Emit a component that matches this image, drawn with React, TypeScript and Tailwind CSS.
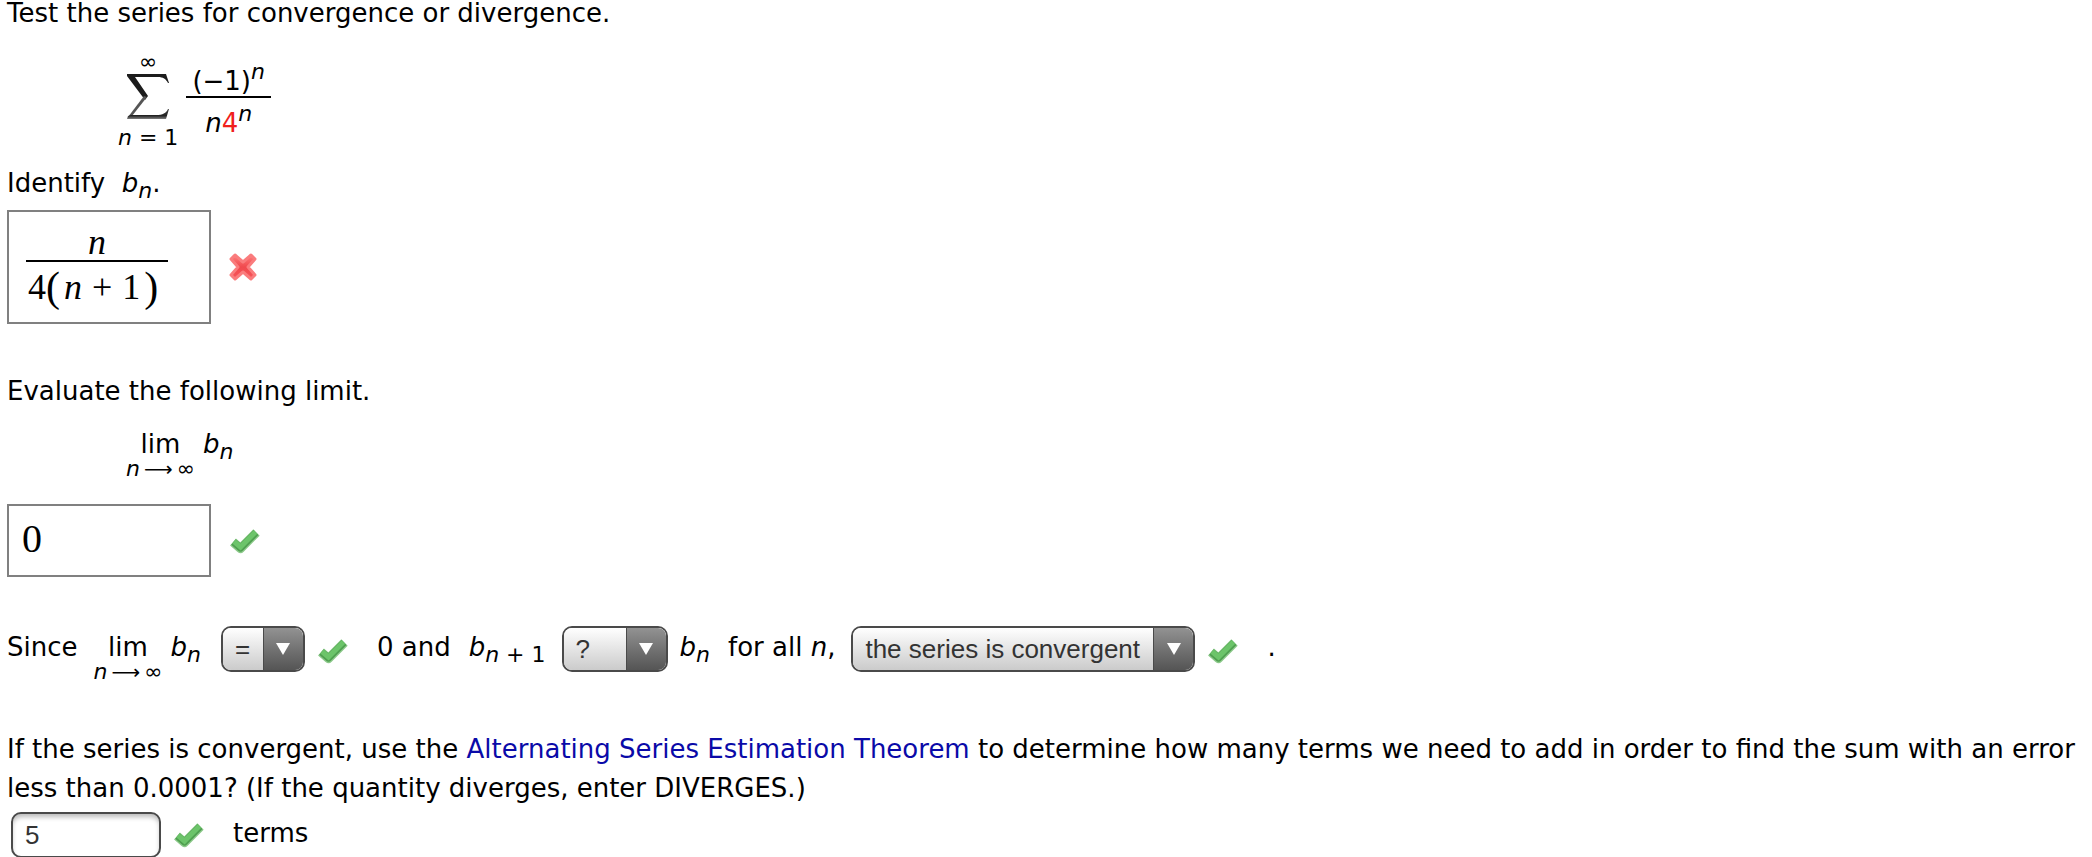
import type { ReactNode } from "react";

const SANS = "font-['DejaVu_Sans',Verdana,sans-serif]";
const SERIF = "font-['Liberation_Serif',serif]";

function Check() {
    return (
        <svg width="32" height="26" viewBox="0 0 32 26" role="img" aria-label="Correct" className="shrink-0">
            <path d="M4 14 L11.5 20.5 L27.5 4.5" fill="none" stroke="#8cc98a" strokeWidth="9" strokeLinejoin="round" />
            <path d="M4.5 14 L11.5 20 L27 4.5" fill="none" stroke="#4f9f50" strokeWidth="7" strokeLinejoin="round" />
            <path d="M5 13.5 L11.5 19 L26.5 4" fill="none" stroke="#6cc46a" strokeWidth="5" />
        </svg>
    );
}

function Cross() {
    return (
        <svg width="28" height="28" viewBox="0 0 28 28" role="img" aria-label="Incorrect" className="shrink-0">
            <defs>
                <linearGradient id="cross" x1="0" y1="0" x2="0" y2="1">
                    <stop offset="0" stopColor="#ff7d7d" />
                    <stop offset="0.5" stopColor="#f04a4e" />
                    <stop offset="1" stopColor="#f8555a" />
                </linearGradient>
            </defs>
            <path
                d="M6 2 L14 9 L22 2 L26 6 L19 14 L26 22 L22 26 L14 19 L6 26 L2 22 L9 14 L2 6 Z"
                fill="url(#cross)"
                stroke="#fa7c7d"
                strokeWidth="3"
                strokeLinejoin="round"
            />
        </svg>
    );
}

function Sigma() {
    return (
        <svg width="42" height="46" viewBox="0 0 42 46" aria-label="sum" role="img" className="mt-0.5">
            <defs>
                <linearGradient id="foot" gradientUnits="userSpaceOnUse" x1="0" y1="35" x2="0" y2="46">
                    <stop offset="0" stopColor="#444" />
                    <stop offset="0.6" stopColor="#222" />
                    <stop offset="1" stopColor="#999" />
                </linearGradient>
            </defs>
            <path d="M0 0 H39 L42 9 H41 C39 5 36 3 31 3 H8 L21 22 L18 26 L0 2 Z" fill="#1c1c1c" />
            <path d="M17 22 L20 23 L5 42 L1 43 Z" fill="#555" />
            <path d="M1 42 L4 41 H29 C36 41 39 39 41 35 H42 L39 45 H0 Z" fill="url(#foot)" />
        </svg>
    );
}

function Bn({ children }: { children?: ReactNode }) {
    return (
        <span className="whitespace-nowrap">
            <i>b</i>
            <sub className="text-[22px]">
                <i>n</i>
                {children}
            </sub>
        </span>
    );
}

function Lim() {
    return (
        <span className="flex flex-col items-center leading-[26px]">
            <span>lim</span>
            <span className="text-[22px] leading-[24px]">
                <i>n</i>
                <span className="px-1 text-[20px]">⟶</span>∞
            </span>
        </span>
    );
}

function Dropdown({ label, value, options, className }: { label: string; value: string; options: string[]; className: string }) {
    return (
        <span className={`relative block h-[46px] shrink-0 overflow-hidden rounded-[10px] border-2 border-[#4a4a4a] ${className}`}>
            <select
                aria-label={label}
                defaultValue={value}
                className="block h-full w-full appearance-none bg-linear-to-b from-white to-[#cbcbcb] pl-3 font-['Liberation_Sans',Arial,sans-serif] text-[26px] leading-[42px] text-[#333]">
                {options.map((option) => (
                    <option key={option}>{option}</option>
                ))}
            </select>
            <span className="pointer-events-none absolute inset-y-0 right-0 flex w-10 items-center justify-center border-l border-[#4a4a4a] bg-linear-to-b from-[#929292] to-[#555]">
                <svg width="14" height="12" viewBox="0 0 14 12" aria-hidden="true">
                    <path d="M0 0 H14 L7 12 Z" fill="#fff" />
                </svg>
            </span>
        </span>
    );
}

export default function App() {
    return (
        <main className={`${SANS} bg-white pl-[7px] text-[26px] leading-[26px] text-black`}>
            <p>Test the series for convergence or divergence.</p>

            <div className="mt-[26px] ml-[111px] flex items-start gap-2">
                <div className="flex flex-col items-center text-[22px] leading-[20px]">
                    <span>∞</span>
                    <Sigma />
                    <span className="mt-2">
                        <i>n</i> = 1
                    </span>
                </div>
                <div className="mt-4 flex flex-col items-center">
                    <span className="border-b-2 border-black px-1.5 pb-0.5">
                        (−1)
                        <sup className="text-[22px]">
                            <i>n</i>
                        </sup>
                    </span>
                    <span className="pt-3">
                        <i>n</i>
                        <span className="text-[#f0201c]">4</span>
                        <sup className="text-[22px]">
                            <i>n</i>
                        </sup>
                    </span>
                </div>
            </div>

            <p className="mt-[22px]">
                Identify &nbsp;
                <Bn />.
            </p>
            <div className="mt-[14px] flex items-center gap-[18px]">
                <div
                    role="math"
                    aria-label="n over 4(n + 1)"
                    className={`${SERIF} flex h-[114px] w-[204px] items-center border-2 border-[#808080] pt-0.5 pl-[17px] text-[36px]`}>
                    <span className="flex flex-col items-center">
                        <i className="leading-[36px]">n</i>
                        <span className="flex w-[142px] items-center border-t-2 border-black pl-0.5 leading-[50px]">
                            4<span className="text-[42px]">(</span>
                            <i className="pl-1">n</i>
                            <span className="px-2.5">+</span>1<span className="pl-1 text-[42px]">)</span>
                        </span>
                    </span>
                </div>
                <Cross />
            </div>

            <p className="mt-[54px]">Evaluate the following limit.</p>
            <div className="mt-[27px] ml-[119px] flex items-start gap-2">
                <Lim />
                <Bn />
            </div>
            <div className="mt-[23px] flex items-center gap-[18px]">
                <input
                    aria-label="Limit"
                    defaultValue="0"
                    className={`${SERIF} h-[73px] w-[204px] border-2 border-[#808080] pb-1 pl-[13px] text-[40px]`}
                />
                <Check />
            </div>

            <div className="mt-[49px] flex items-start leading-[42px] whitespace-nowrap">
                <span className="mr-4">Since</span>
                <span className="mt-2 mr-2">
                    <Lim />
                </span>
                <Bn />
                <Dropdown label="Comparison of the limit with 0" value="=" options={["=", "≠", "?"]} className="mr-3 ml-5 w-[84px]" />
                <span className="mt-3 mr-7">
                    <Check />
                </span>
                <span className="mr-[18px]">0 and</span>
                <Bn> + 1</Bn>
                <Dropdown label="Comparison of consecutive terms" value="?" options={["?", "≤", "≥"]} className="mr-3 ml-4 w-[106px]" />
                <Bn />
                <span className="ml-[18px]">
                    for all <i>n</i>,
                </span>
                <Dropdown
                    label="Conclusion"
                    value="the series is convergent"
                    options={["the series is convergent", "the series is divergent"]}
                    className="mr-3 ml-4 w-[344px]"
                />
                <span className="mt-3 mr-7">
                    <Check />
                </span>
                <span>.</span>
            </div>

            <p className="mt-[46px] leading-[39px] whitespace-nowrap">
                If the series is convergent, use the{" "}
                <a href="#theorem" className="text-[#0a0aa8]">
                    Alternating Series Estimation Theorem
                </a>{" "}
                to determine how many terms we need to add in order to find the sum with an error
                <br />
                less than 0.0001? (If the quantity diverges, enter DIVERGES.)
            </p>
            <div className="mt-1 ml-1 flex items-center">
                <input
                    id="terms"
                    defaultValue="5"
                    className="h-[46px] w-[150px] rounded-[10px] border-2 border-[#4a4a4a] pl-3 font-['Liberation_Sans',Arial,sans-serif] text-[26px] text-[#333] shadow-[inset_0_4px_5px_-1px_#bbb]"
                />
                <span className="mr-7 ml-3">
                    <Check />
                </span>
                <label htmlFor="terms" className="mb-1">
                    terms
                </label>
            </div>
        </main>
    );
}
